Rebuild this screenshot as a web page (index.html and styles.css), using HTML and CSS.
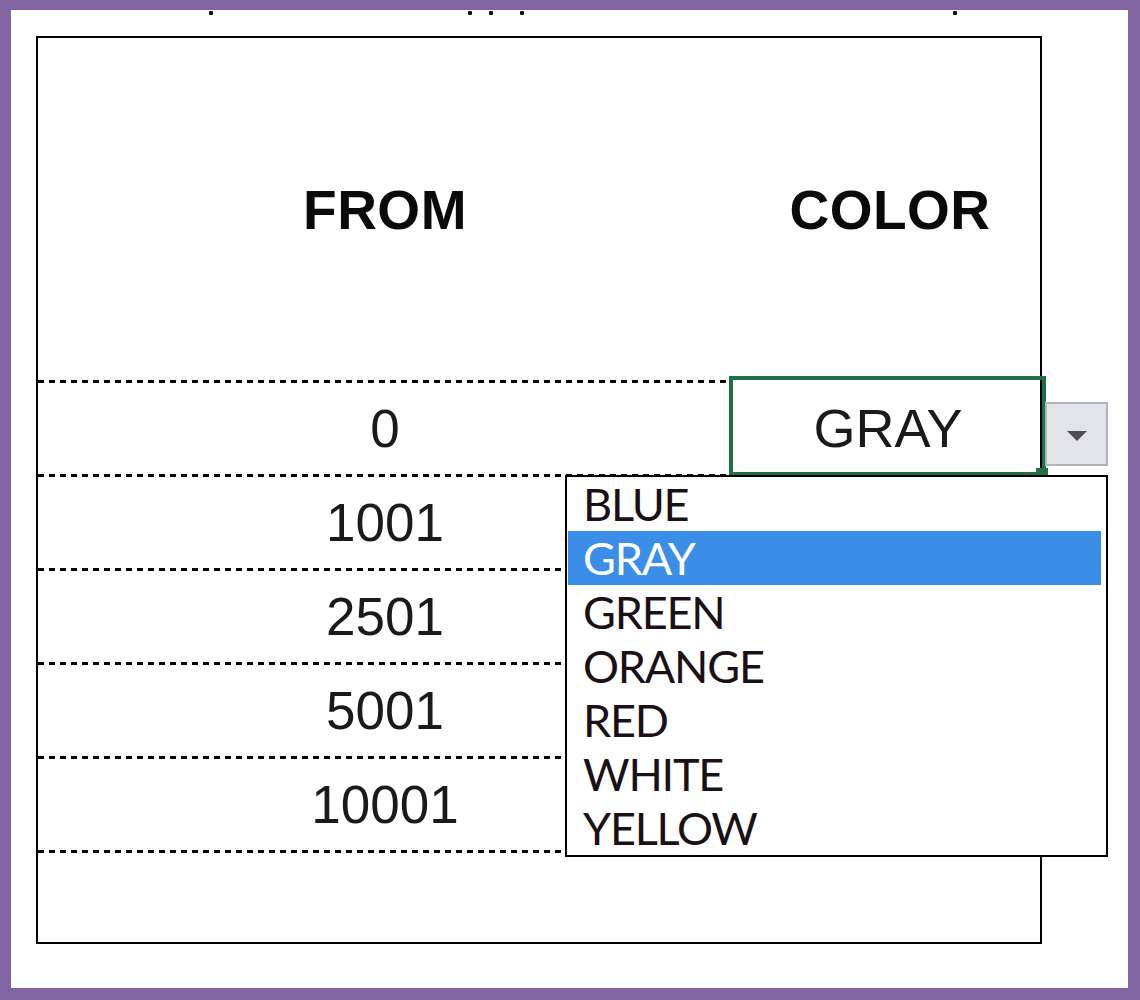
FILE: index.html
```html
<!DOCTYPE html>
<html>
<head>
<meta charset="utf-8">
<link rel="stylesheet" href="styles.css">
</head>
<body>
<div class="frame">
  <div class="clip-strip">
    <span class="dot d1"></span><span class="dot d2"></span><span class="dot d3"></span><span class="dot d4"></span><span class="dot d5"></span>
  </div>
  <div class="sheet">
    <div class="head from-head">FROM</div>
    <div class="head color-head">COLOR</div>

    <div class="num dashed">0</div>
    <div class="color-cell selected-cell">
      <span class="cell-value">GRAY</span>
      <div class="selection"><span class="fill-handle"></span></div>
      <div class="dd-button">
        <svg width="22" height="12" viewBox="0 0 22 12"><polygon points="1,1 21,1 11,11" fill="#4d4d52"/></svg>
      </div>
    </div>

    <div class="num dashed">1001</div>
    <div class="color-cell"></div>
    <div class="num dashed">2501</div>
    <div class="color-cell"></div>
    <div class="num dashed">5001</div>
    <div class="color-cell"></div>
    <div class="num dashed">10001</div>
    <div class="color-cell"></div>
    <div class="num dashed"></div>
    <div class="color-cell"></div>

    <ul class="dd-list">
      <li class="dd-item">BLUE</li>
      <li class="dd-item active">GRAY</li>
      <li class="dd-item">GREEN</li>
      <li class="dd-item">ORANGE</li>
      <li class="dd-item">RED</li>
      <li class="dd-item">WHITE</li>
      <li class="dd-item">YELLOW</li>
    </ul>
  </div>
</div>
</body>
</html>
```
FILE: styles.css
```css
html, body {
  margin: 0;
  padding: 0;
}
body {
  background: #8165a3;
  width: 1140px;
  height: 1000px;
  box-sizing: border-box;
  padding: 10px 12px 12px 11px;
}
.frame {
  background: #fff;
  width: 1117px;
  height: 978px;
  box-sizing: border-box;
  padding-left: 25px;
}
.clip-strip {
  height: 6px;
  display: flex;
  align-items: flex-start;
  margin-left: -25px;
}
.dot {
  display: block;
  width: 4px;
  height: 4px;
  margin-top: 1px;
  background: #111;
  border-radius: 1px;
}
.d1 { margin-left: 198px; }
.d2 { margin-left: 255px; }
.d3 { margin-left: 17px; }
.d4 { margin-left: 27px; }
.d5 { margin-left: 429px; }

.sheet {
  position: relative;
  margin-top: 20px;
  width: 1006px;
  height: 908px;
  box-sizing: border-box;
  border: 2px solid #000;
  display: grid;
  grid-template-columns: 694px 308px;
  grid-template-rows: 342px repeat(5, 94px) 1fr;
}
.head {
  font-family: "Liberation Sans", Arial, sans-serif;
  font-weight: bold;
  font-size: 55px;
  letter-spacing: 0.5px;
  color: #0a0a0a;
  display: flex;
  align-items: center;
  justify-content: center;
  padding-top: 2px;
}
.color-head {
  padding-left: 8px;
}
.num {
  font-family: "Liberation Sans", Arial, sans-serif;
  font-size: 53px;
  color: #1a1a1a;
  display: flex;
  align-items: center;
  justify-content: center;
  padding-top: 2px;
}
.dashed {
  background-image: repeating-linear-gradient(to right, #000 0 6px, transparent 6px 11px);
  background-size: 100% 3px;
  background-repeat: no-repeat;
  background-position: 0 0;
}
.color-cell {
  position: relative;
}
.selected-cell {
  display: flex;
  align-items: center;
  justify-content: center;
  padding-left: 4px;
  padding-top: 2px;
}
.cell-value {
  font-family: "Liberation Sans", Arial, sans-serif;
  font-size: 54px;
  color: #1a1a1a;
}
.selection {
  position: absolute;
  left: -3px;
  top: -4px;
  right: -6px;
  bottom: -2px;
  border: 4px solid #1f7145;
}
.fill-handle {
  position: absolute;
  right: -6px;
  bottom: -4px;
  width: 12px;
  height: 8px;
  background: #1f7145;
}
.dd-button {
  position: absolute;
  left: 313px;
  top: 22px;
  width: 63px;
  height: 64px;
  box-sizing: border-box;
  background: #e3e4ea;
  border: 2px solid #b2b3bb;
  display: flex;
  align-items: center;
  justify-content: center;
  padding-top: 4px;
}
.dd-list {
  position: absolute;
  left: 527px;
  top: 437px;
  width: 543px;
  margin: 0;
  padding: 0;
  list-style: none;
  box-sizing: border-box;
  background: #fff;
  border: 2px solid #000;
  z-index: 5;
}
.dd-item {
  height: 54px;
  line-height: 54px;
  margin: 0 5px 0 1px;
  padding-left: 15px;
  font-family: Lato, "Open Sans", sans-serif;
  font-size: 45px;
  letter-spacing: -1.2px;
  color: #1a1016;
  white-space: nowrap;
}
.dd-item.active {
  background: #3a8ee8;
  color: #fff;
}
```
